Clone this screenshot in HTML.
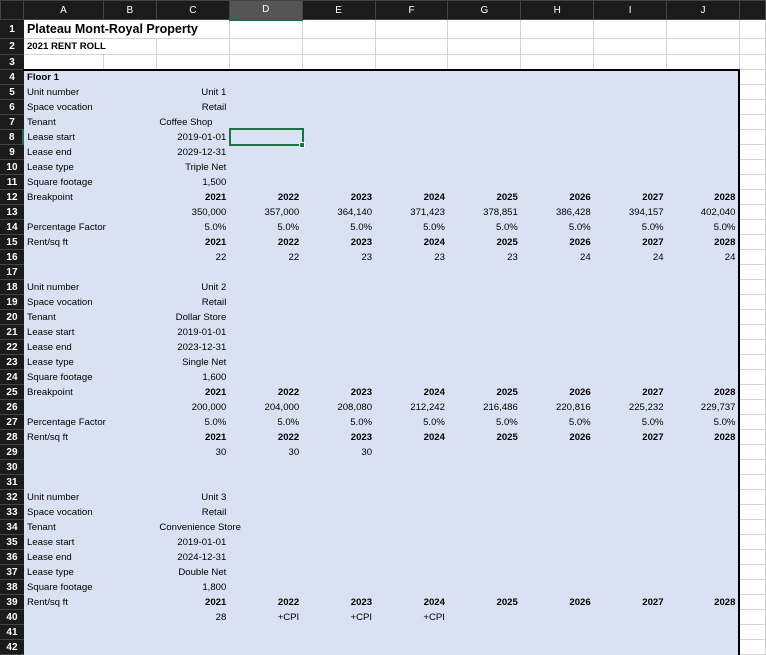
<!DOCTYPE html>
<html><head><meta charset="utf-8"><style>
*{margin:0;padding:0;box-sizing:border-box}
body{width:766px;height:652px;overflow:hidden;background:#fff;font-family:"Liberation Sans",Arial,sans-serif;font-size:9.6px;color:#000;position:relative}
table{border-collapse:collapse;table-layout:fixed;position:absolute;left:0;top:0}
td{height:15px;padding:0 3px;white-space:nowrap;overflow:visible;border:1px solid #d4d4d4;line-height:13px}
tr.h td{height:19px;background:#1b1b1b;color:#fff;text-align:center;border:1px solid #444;font-size:10px}
td.n{background:#1b1b1b;color:#fff;font-weight:bold;text-align:center;border:1px solid #1b1b1b;border-bottom:1px solid #444;padding:0;font-size:10px}
tr.b td.c{background:#d9e1f2;border:none}
tr.b td.k{border-left:2px solid #000}
tr.f td.c{border-top:2px solid #000}
.r{text-align:right}.bd{font-weight:bold}
</style></head><body>
<table>
<colgroup><col style="width:23px"><col style="width:80px"><col style="width:53px"><col style="width:73px"><col style="width:73px"><col style="width:73px"><col style="width:73px"><col style="width:73px"><col style="width:73px"><col style="width:73px"><col style="width:73px"><col style="width:26px"></colgroup>
<tr class="h"><td style="background:#1b1b1b"></td><td>A</td><td>B</td><td>C</td><td style="background:#555;border-bottom:2px solid #1e7145">D</td><td>E</td><td>F</td><td>G</td><td>H</td><td>I</td><td>J</td><td></td></tr>
<tr><td class="n" style="height:19px">1</td><td colspan="3" class="bd" style="font-size:12.5px;border-right:none">Plateau Mont-Royal Property</td><td></td><td></td><td></td><td></td><td></td><td></td><td></td><td></td></tr>
<tr><td class="n" style="height:16px">2</td><td colspan="2" class="bd">2021 RENT ROLL</td><td></td><td></td><td></td><td></td><td></td><td></td><td></td><td></td><td></td></tr>
<tr><td class="n">3</td><td></td><td></td><td></td><td></td><td></td><td></td><td></td><td></td><td></td><td></td><td></td></tr>
<tr class="b f"><td class="n">4</td><td class="c bd">Floor 1</td><td class="c"></td><td class="c"></td><td class="c"></td><td class="c"></td><td class="c"></td><td class="c"></td><td class="c"></td><td class="c"></td><td class="c"></td><td class="k"></td></tr>
<tr class="b"><td class="n">5</td><td class="c" colspan="2">Unit number</td><td class="c r">Unit 1</td><td class="c" colspan="7"></td><td class="k"></td></tr>
<tr class="b"><td class="n">6</td><td class="c" colspan="2">Space vocation</td><td class="c r">Retail</td><td class="c" colspan="7"></td><td class="k"></td></tr>
<tr class="b"><td class="n">7</td><td class="c" colspan="2">Tenant</td><td class="c">Coffee Shop</td><td class="c" colspan="7"></td><td class="k"></td></tr>
<tr class="b"><td class="n" style="border-right:2px solid #1e7145">8</td><td class="c" colspan="2">Lease start</td><td class="c r">2019-01-01</td><td class="c" colspan="7"></td><td class="k"></td></tr>
<tr class="b"><td class="n">9</td><td class="c" colspan="2">Lease end</td><td class="c r">2029-12-31</td><td class="c" colspan="7"></td><td class="k"></td></tr>
<tr class="b"><td class="n">10</td><td class="c" colspan="2">Lease type</td><td class="c r">Triple Net</td><td class="c" colspan="7"></td><td class="k"></td></tr>
<tr class="b"><td class="n">11</td><td class="c" colspan="2">Square footage</td><td class="c r">1,500</td><td class="c" colspan="7"></td><td class="k"></td></tr>
<tr class="b"><td class="n">12</td><td class="c" colspan="2">Breakpoint</td><td class="c r bd">2021</td><td class="c r bd">2022</td><td class="c r bd">2023</td><td class="c r bd">2024</td><td class="c r bd">2025</td><td class="c r bd">2026</td><td class="c r bd">2027</td><td class="c r bd">2028</td><td class="k"></td></tr>
<tr class="b"><td class="n">13</td><td class="c" colspan="2"></td><td class="c r">350,000</td><td class="c r">357,000</td><td class="c r">364,140</td><td class="c r">371,423</td><td class="c r">378,851</td><td class="c r">386,428</td><td class="c r">394,157</td><td class="c r">402,040</td><td class="k"></td></tr>
<tr class="b"><td class="n">14</td><td class="c" colspan="2">Percentage Factor</td><td class="c r">5.0%</td><td class="c r">5.0%</td><td class="c r">5.0%</td><td class="c r">5.0%</td><td class="c r">5.0%</td><td class="c r">5.0%</td><td class="c r">5.0%</td><td class="c r">5.0%</td><td class="k"></td></tr>
<tr class="b"><td class="n">15</td><td class="c" colspan="2">Rent/sq ft</td><td class="c r bd">2021</td><td class="c r bd">2022</td><td class="c r bd">2023</td><td class="c r bd">2024</td><td class="c r bd">2025</td><td class="c r bd">2026</td><td class="c r bd">2027</td><td class="c r bd">2028</td><td class="k"></td></tr>
<tr class="b"><td class="n">16</td><td class="c" colspan="2"></td><td class="c r">22</td><td class="c r">22</td><td class="c r">23</td><td class="c r">23</td><td class="c r">23</td><td class="c r">24</td><td class="c r">24</td><td class="c r">24</td><td class="k"></td></tr>
<tr class="b"><td class="n">17</td><td class="c" colspan="10"></td><td class="k"></td></tr>
<tr class="b"><td class="n">18</td><td class="c" colspan="2">Unit number</td><td class="c r">Unit 2</td><td class="c" colspan="7"></td><td class="k"></td></tr>
<tr class="b"><td class="n">19</td><td class="c" colspan="2">Space vocation</td><td class="c r">Retail</td><td class="c" colspan="7"></td><td class="k"></td></tr>
<tr class="b"><td class="n">20</td><td class="c" colspan="2">Tenant</td><td class="c r">Dollar Store</td><td class="c" colspan="7"></td><td class="k"></td></tr>
<tr class="b"><td class="n">21</td><td class="c" colspan="2">Lease start</td><td class="c r">2019-01-01</td><td class="c" colspan="7"></td><td class="k"></td></tr>
<tr class="b"><td class="n">22</td><td class="c" colspan="2">Lease end</td><td class="c r">2023-12-31</td><td class="c" colspan="7"></td><td class="k"></td></tr>
<tr class="b"><td class="n">23</td><td class="c" colspan="2">Lease type</td><td class="c r">Single Net</td><td class="c" colspan="7"></td><td class="k"></td></tr>
<tr class="b"><td class="n">24</td><td class="c" colspan="2">Square footage</td><td class="c r">1,600</td><td class="c" colspan="7"></td><td class="k"></td></tr>
<tr class="b"><td class="n">25</td><td class="c" colspan="2">Breakpoint</td><td class="c r bd">2021</td><td class="c r bd">2022</td><td class="c r bd">2023</td><td class="c r bd">2024</td><td class="c r bd">2025</td><td class="c r bd">2026</td><td class="c r bd">2027</td><td class="c r bd">2028</td><td class="k"></td></tr>
<tr class="b"><td class="n">26</td><td class="c" colspan="2"></td><td class="c r">200,000</td><td class="c r">204,000</td><td class="c r">208,080</td><td class="c r">212,242</td><td class="c r">216,486</td><td class="c r">220,816</td><td class="c r">225,232</td><td class="c r">229,737</td><td class="k"></td></tr>
<tr class="b"><td class="n">27</td><td class="c" colspan="2">Percentage Factor</td><td class="c r">5.0%</td><td class="c r">5.0%</td><td class="c r">5.0%</td><td class="c r">5.0%</td><td class="c r">5.0%</td><td class="c r">5.0%</td><td class="c r">5.0%</td><td class="c r">5.0%</td><td class="k"></td></tr>
<tr class="b"><td class="n">28</td><td class="c" colspan="2">Rent/sq ft</td><td class="c r bd">2021</td><td class="c r bd">2022</td><td class="c r bd">2023</td><td class="c r bd">2024</td><td class="c r bd">2025</td><td class="c r bd">2026</td><td class="c r bd">2027</td><td class="c r bd">2028</td><td class="k"></td></tr>
<tr class="b"><td class="n">29</td><td class="c" colspan="2"></td><td class="c r">30</td><td class="c r">30</td><td class="c r">30</td><td class="c" colspan="5"></td><td class="k"></td></tr>
<tr class="b"><td class="n">30</td><td class="c" colspan="10"></td><td class="k"></td></tr>
<tr class="b"><td class="n">31</td><td class="c" colspan="10"></td><td class="k"></td></tr>
<tr class="b"><td class="n">32</td><td class="c" colspan="2">Unit number</td><td class="c r">Unit 3</td><td class="c" colspan="7"></td><td class="k"></td></tr>
<tr class="b"><td class="n">33</td><td class="c" colspan="2">Space vocation</td><td class="c r">Retail</td><td class="c" colspan="7"></td><td class="k"></td></tr>
<tr class="b"><td class="n">34</td><td class="c" colspan="2">Tenant</td><td class="c" colspan="2">Convenience Store</td><td class="c" colspan="6"></td><td class="k"></td></tr>
<tr class="b"><td class="n">35</td><td class="c" colspan="2">Lease start</td><td class="c r">2019-01-01</td><td class="c" colspan="7"></td><td class="k"></td></tr>
<tr class="b"><td class="n">36</td><td class="c" colspan="2">Lease end</td><td class="c r">2024-12-31</td><td class="c" colspan="7"></td><td class="k"></td></tr>
<tr class="b"><td class="n">37</td><td class="c" colspan="2">Lease type</td><td class="c r">Double Net</td><td class="c" colspan="7"></td><td class="k"></td></tr>
<tr class="b"><td class="n">38</td><td class="c" colspan="2">Square footage</td><td class="c r">1,800</td><td class="c" colspan="7"></td><td class="k"></td></tr>
<tr class="b"><td class="n">39</td><td class="c" colspan="2">Rent/sq ft</td><td class="c r bd">2021</td><td class="c r bd">2022</td><td class="c r bd">2023</td><td class="c r bd">2024</td><td class="c r bd">2025</td><td class="c r bd">2026</td><td class="c r bd">2027</td><td class="c r bd">2028</td><td class="k"></td></tr>
<tr class="b"><td class="n">40</td><td class="c" colspan="2"></td><td class="c r">28</td><td class="c r">+CPI</td><td class="c r">+CPI</td><td class="c r">+CPI</td><td class="c" colspan="4"></td><td class="k"></td></tr>
<tr class="b"><td class="n">41</td><td class="c" colspan="10"></td><td class="k"></td></tr>
<tr class="b"><td class="n">42</td><td class="c" colspan="10"></td><td class="k"></td></tr>
</table>
<div style="position:absolute;left:229px;top:128px;width:75px;height:18px;border:2px solid #1e7145"></div>
<div style="position:absolute;left:299px;top:142px;width:6px;height:6px;background:#1e7145;border:1px solid #fff"></div>
</body></html>
